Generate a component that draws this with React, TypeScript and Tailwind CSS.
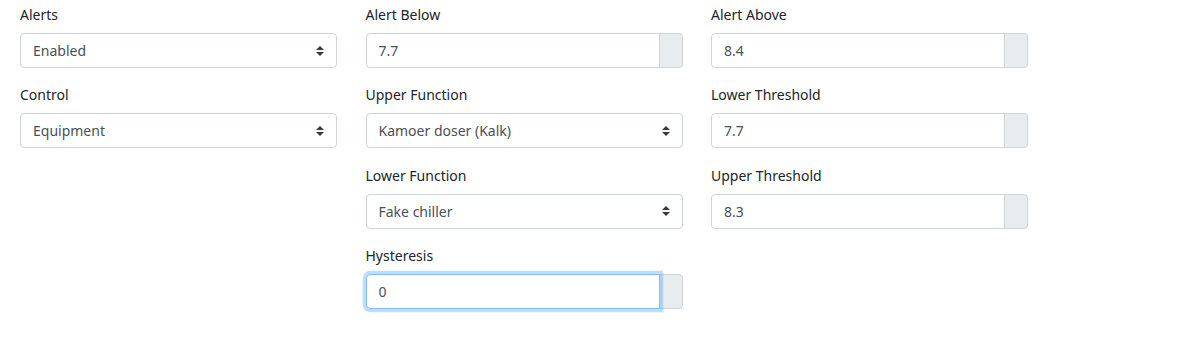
import type { ReactNode } from 'react';

const font = { fontFamily: '"Segoe UI", "Noto Sans", "Liberation Sans", sans-serif' };

function Field({ label, children }: { label: string; children: ReactNode }) {
  return (
    <div className="mb-[16.3px]">
      <label className="mb-2 block text-[14px] leading-[21px] text-[#212529]">{label}</label>
      {children}
    </div>
  );
}

function SelectBox({ value }: { value: string }) {
  return (
    <div className="flex h-[35px] w-full items-center justify-between rounded-[4px] border border-[#ced4da] bg-white pl-3 pr-3 text-[14px] text-[#495057]">
      <span>{value}</span>
      <svg width="8" height="10" viewBox="0 0 4 5" aria-hidden="true">
        <path fill="#343a40" d="M2 0L0 2h4zm0 5L0 3h4z" />
      </svg>
    </div>
  );
}

function NumberGroup({ value, focused = false }: { value: string; focused?: boolean }) {
  return (
    <div className="flex h-[35px] w-full">
      <div
        className={
          focused
            ? 'relative z-10 flex flex-1 items-center rounded-l-[4px] border border-[#80bdff] bg-white px-3 text-[14px] text-[#495057] shadow-[0_0_0_3.2px_rgba(0,123,255,0.25)]'
            : 'flex flex-1 items-center rounded-l-[4px] border border-[#ced4da] bg-white px-3 text-[14px] text-[#495057]'
        }
      >
        {value}
      </div>
      <div className="-ml-px w-[24px] rounded-r-[4px] border border-[#ced4da] bg-[#e9ecef]" />
    </div>
  );
}

export default function App() {
  return (
    <div className="h-[338px] w-[1200px] bg-white pl-5 pt-[4px]" style={font}>
      <div className="grid grid-cols-[317px_317px_317px] gap-x-[28.5px]">
        <div>
          <Field label="Alerts">
            <SelectBox value="Enabled" />
          </Field>
          <Field label="Control">
            <SelectBox value="Equipment" />
          </Field>
        </div>
        <div>
          <Field label="Alert Below">
            <NumberGroup value="7.7" />
          </Field>
          <Field label="Upper Function">
            <SelectBox value="Kamoer doser (Kalk)" />
          </Field>
          <Field label="Lower Function">
            <SelectBox value="Fake chiller" />
          </Field>
          <Field label="Hysteresis">
            <NumberGroup value="0" focused />
          </Field>
        </div>
        <div>
          <Field label="Alert Above">
            <NumberGroup value="8.4" />
          </Field>
          <Field label="Lower Threshold">
            <NumberGroup value="7.7" />
          </Field>
          <Field label="Upper Threshold">
            <NumberGroup value="8.3" />
          </Field>
        </div>
      </div>
    </div>
  );
}
